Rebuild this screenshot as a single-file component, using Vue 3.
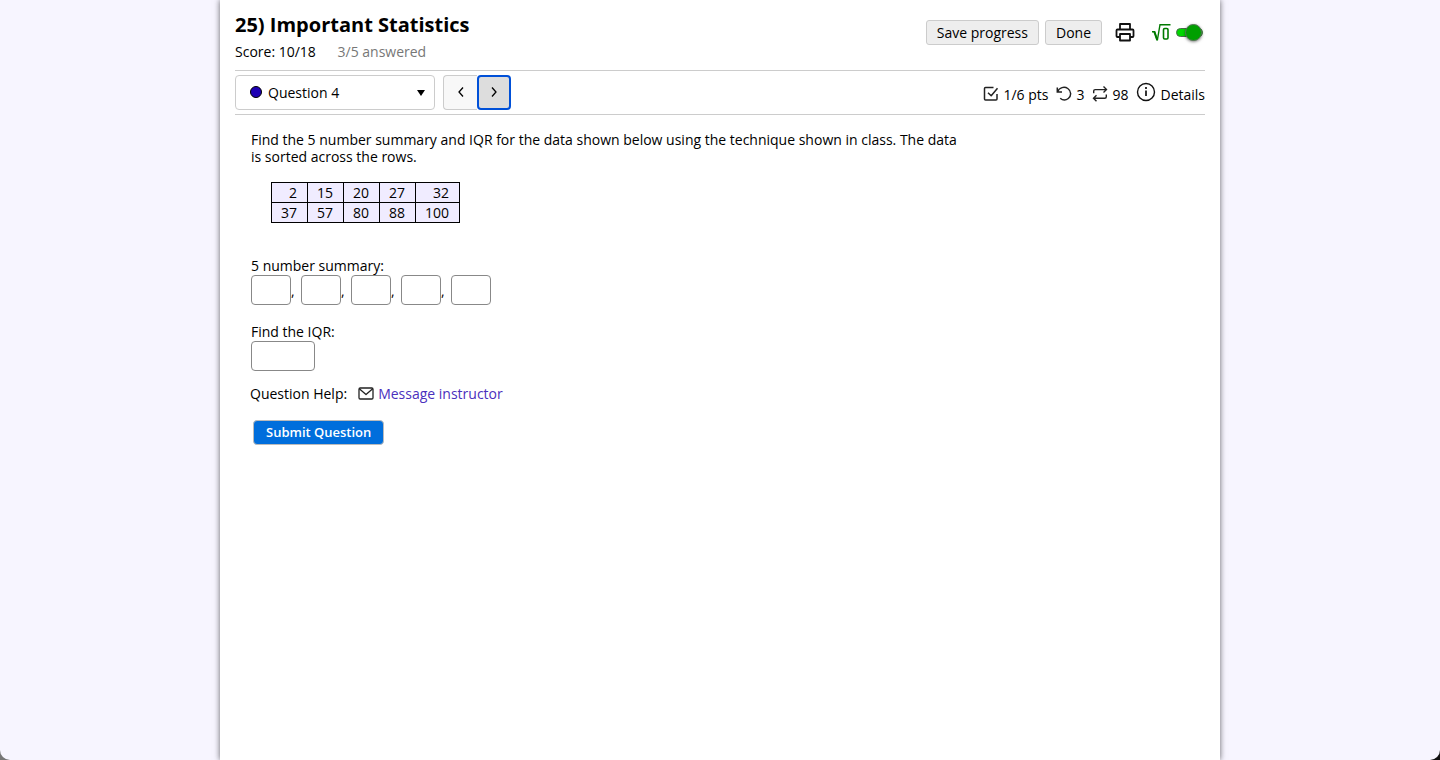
<script setup>
import { ref } from 'vue'

const rows = [
  [2, 15, 20, 27, 32],
  [37, 57, 80, 88, 100],
]
const summary = ref(['', '', '', '', ''])
const iqr = ref('')
const question = ref('Question 4')
const mathEntry = ref(true)
</script>

<template>
  <div class="window">
    <main class="sheet">
      <header class="head">
        <div>
          <h1>25) Important Statistics</h1>
          <p class="score">Score: 10/18 <span>3/5 answered</span></p>
        </div>
        <div class="tools">
          <button type="button" class="plain">Save progress</button>
          <button type="button" class="plain">Done</button>
          <button type="button" class="icon-btn" aria-label="Print">
            <svg width="20" height="20" viewBox="0 0 20 20" fill="none" stroke="#111" stroke-width="1.8" stroke-linejoin="round">
              <path d="M5 6.500V1h10V6.500M5 14H2.500Q1.500 14 1.500 13V7.500Q1.500 6.500 2.500 6.500H17.500Q18.500 6.500 18.500 7.500V13Q18.500 14 17.500 14H15M5 11h10v6.500H5z" />
            </svg>
          </button>
          <label class="math" aria-label="Equation editor">
            <svg width="20" height="20" viewBox="0 0 20 20" fill="none" stroke="#007a00">
              <path d="M1 8.700H3.500L6.300 17.500 9 1.700H19.500" stroke-width="1.400" />
              <path d="M3.300 8.700L6.200 17" stroke-width="2" />
              <rect x="12.500" y="5.500" width="4.500" height="10.500" rx="1.200" stroke-width="1.600" />
            </svg>
            <input v-model="mathEntry" type="checkbox" />
            <span class="track"><span class="knob"></span></span>
          </label>
        </div>
      </header>

      <nav class="bar">
        <div class="picker">
          <svg class="dot" width="14" height="14" viewBox="0 0 14 14"><circle cx="7" cy="7" r="5.500" fill="#1e00b4" stroke="#000" /></svg>
          <select v-model="question" aria-label="Question">
            <option>Question 4</option>
          </select>
          <svg class="caret" width="8" height="6" viewBox="0 0 8 6"><path d="M0 0h8L4 6z" /></svg>
        </div>
        <div class="steps">
          <button type="button" class="prev" aria-label="Previous question">
            <svg width="8" height="12" viewBox="0 0 8 12" fill="none" stroke="#000" stroke-width="1.3"><path d="M6 1.500L2 6l4 4.500" /></svg>
          </button>
          <button type="button" class="next" aria-label="Next question">
            <svg width="8" height="12" viewBox="0 0 8 12" fill="none" stroke="#000" stroke-width="1.3"><path d="M2 1.500L6 6l-4 4.500" /></svg>
          </button>
        </div>
        <div class="info">
          <span class="stat">
            <svg width="16" height="16" viewBox="0 0 16 16" fill="none" stroke="#222" stroke-width="1.500" stroke-linejoin="round">
              <path d="M10.500 1.500H2.500Q1.500 1.500 1.500 2.500V13Q1.500 14 2.500 14H13Q14 14 14 13V8M5 6.800l3.200 3L14.500 2.300" />
            </svg>
            1/6 pts
          </span>
          <span class="stat">
            <svg width="16" height="16" viewBox="0 0 16 16" fill="none" stroke="#222" stroke-width="1.500">
              <path d="M1.300 1.500V6H6M1.600 5.800C3.200 1.200 8.500 .3 11.800 2.500C15.500 5 15.500 10 12.300 12.500C9.800 14.400 6.500 14.200 4.200 12.200" />
            </svg>
            3
          </span>
          <span class="stat">
            <svg width="16" height="16" viewBox="0 0 16 16" fill="none" stroke="#222" stroke-width="1.400">
              <path d="M11.500 .6L14.500 3.600l-3 3M14.500 3.600H3.200Q1.700 3.600 1.700 5.100V7.300M4.500 9.200l-3 3 3 3M1.500 12.200H12.800Q14.300 12.200 14.300 10.700V8.500" />
            </svg>
            98
          </span>
          <button type="button" class="details">
            <svg width="20" height="20" viewBox="0 0 20 20" fill="none" stroke="#111" stroke-width="1.400">
              <circle cx="10" cy="10" r="8.500" /><path d="M10 5v2M10 8.500V14" stroke-width="1.700" />
            </svg>
            Details
          </button>
        </div>
      </nav>

      <form class="question" @submit.prevent>
        <p class="prompt">
          Find the 5 number summary and IQR for the data shown below using the technique shown in class. The data
          is sorted across the rows.
        </p>
        <table>
          <tbody>
            <tr v-for="(row, r) in rows" :key="r">
              <td v-for="n in row" :key="n">{{ n }}</td>
            </tr>
          </tbody>
        </table>

        <fieldset>
          <legend>5 number summary:</legend>
          <div class="five">
            <template v-for="(v, i) in summary" :key="i">
              <input v-model="summary[i]" type="text" :aria-label="`Value ${i + 1}`" />
              <span v-if="i < 4" class="comma">,</span>
            </template>
          </div>
        </fieldset>

        <div class="iqr">
          <label for="iqr">Find the IQR:</label>
          <input id="iqr" v-model="iqr" type="text" />
        </div>

        <p class="help">
          Question Help:
          <a href="#message">
            <svg width="16" height="14" viewBox="0 0 16 14" fill="none" stroke="#222" stroke-width="1.300" stroke-linejoin="round">
              <rect x="1" y="1" width="14" height="11" rx="1.200" /><path d="M1.300 1.800L8 7.500l6.700-5.700" />
            </svg>
            Message instructor
          </a>
        </p>
        <button type="submit" class="submit">Submit Question</button>
      </form>
    </main>
  </div>
</template>

<style>
html {
  background: linear-gradient(90deg, #777, #111 50%);
}
</style>

<style scoped>
* {
  box-sizing: border-box;
}
.window {
  min-height: 100vh;
  display: flex;
  justify-content: center;
  background: #f7f5ff;
  border-radius: 0 0 10px 10px;
  overflow: hidden;
  color: #000;
  font: 500 14px/17px "Trebuchet MS", "Open Sans", "Noto Sans", sans-serif;
}
button,
input,
select {
  font: inherit;
  color: inherit;
  margin: 0;
}
.sheet {
  width: 100%;
  max-width: 1000px;
  padding: 0 15px;
  background: #fff;
  box-shadow: 0 0 6px rgba(0, 0, 0, 0.6);
}
.head {
  display: flex;
  justify-content: space-between;
  height: 71px;
  padding-top: 11px;
  border-bottom: 1px solid #ccc;
}
h1 {
  margin: 0;
  font-size: 20px;
  line-height: 28px;
  font-weight: 700;
}
.score {
  margin: 4px 0 0;
}
.score span {
  margin-left: 18px;
  color: #777;
}
.tools {
  display: flex;
  align-items: center;
  height: 25px;
  margin-top: 9px;
}
.plain {
  height: 25px;
  margin-right: 6px;
  padding: 0 10px;
  border: 1px solid #ccc;
  border-radius: 3px;
  background: #eee;
}
.icon-btn {
  display: flex;
  margin: 0 16px 0 7px;
  padding: 0;
  border: 0;
  background: none;
}
.math {
  display: flex;
  align-items: center;
  gap: 5px;
  padding-right: 2px;
}
.math input {
  position: absolute;
  opacity: 0;
}
.track {
  display: flex;
  align-items: center;
  justify-content: flex-end;
  width: 27px;
  height: 9px;
  border: 1px solid #4a6a4a;
  border-radius: 5px;
  background: #00d800;
}
.knob {
  flex: none;
  width: 17px;
  height: 17px;
  border: 1px solid #557755;
  border-radius: 50%;
  background: #009f00;
  box-shadow: 0 1px 3px rgba(0, 0, 0, 0.5);
}
.bar {
  display: flex;
  align-items: center;
  height: 44px;
  border-bottom: 1px solid #ccc;
}
.picker {
  position: relative;
  width: 200px;
  height: 35px;
}
.picker select {
  width: 100%;
  height: 100%;
  padding: 0 28px 0 32px;
  border: 1px solid #ccc;
  border-radius: 4px;
  background: #fff;
  appearance: none;
}
.dot,
.caret {
  position: absolute;
  pointer-events: none;
}
.dot {
  left: 14px;
  top: 10px;
}
.caret {
  right: 10px;
  top: 15px;
}
.steps {
  display: flex;
  margin-left: 8px;
}
.steps button {
  display: flex;
  align-items: center;
  justify-content: center;
  width: 34px;
  height: 35px;
  padding: 0 0 1px;
  border: 1px solid #ccc;
  background: #f8f8f8;
}
.steps .prev {
  border-right: 0;
  border-radius: 4px 0 0 4px;
}
.steps .next {
  border: 2px solid #0050d8;
  border-radius: 4px;
  background: #ddd;
}
.info {
  display: flex;
  align-items: center;
  gap: 8px;
  margin-left: auto;
  padding-top: 3px;
}
.stat,
.details {
  display: flex;
  align-items: center;
  gap: 4px;
}
.details svg {
  margin-bottom: 4px;
}
.details {
  padding: 0;
  border: 0;
  background: none;
}
.question {
  padding: 16px;
}
.prompt {
  max-width: 712px;
  margin: 0 0 17px;
}
table {
  margin-left: 20px;
  border-collapse: collapse;
  background: #f0ecff;
}
td {
  height: 20px;
  padding: 0 10px 0 9px;
  border: 1px solid #000;
  text-align: right;
  line-height: 19px;
}
fieldset {
  margin: 34px 0 18px;
  padding: 0;
  border: 0;
}
legend {
  padding: 0;
  margin-bottom: 1px;
}
input[type="text"] {
  display: block;
  width: 40px;
  height: 30px;
  padding: 4px;
  border: 1px solid #888;
  border-radius: 4px;
  background: #fff;
}
.five {
  display: flex;
  align-items: center;
}
.comma {
  width: 10px;
}
.iqr label {
  display: block;
  margin-bottom: 1px;
}
.iqr input[type="text"] {
  width: 64px;
}
.help {
  display: flex;
  gap: 11px;
  margin: 14px 0 0 -1px;
}
.help a {
  display: flex;
  align-items: center;
  gap: 4px;
  color: #4a2fbd;
  text-decoration: none;
}
.submit {
  display: block;
  height: 25px;
  margin: 18px 0 0 2px;
  padding: 0 12px;
  border: 1px solid #bbb;
  border-radius: 4px;
  background: #006edc;
  color: #fff;
  font-size: 13px;
  font-weight: 600;
}
</style>
